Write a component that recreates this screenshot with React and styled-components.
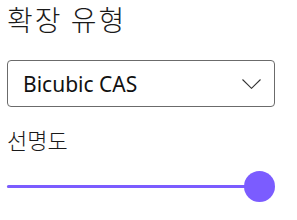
import React, {useState} from 'react';
import styled, {createGlobalStyle} from "styled-components";

const GlobalStyle = createGlobalStyle`
html, body {
margin: 0;
padding: 0;
background: #ffffff;
}
body {
font-family: "Noto Sans", "Noto Sans CJK KR", sans-serif;
color: #1a1a1a;
}
`;

function App() {
    const [value] = useState('Bicubic CAS')
    const [sharpness] = useState(100)

    return (
        <>
            <GlobalStyle/>
            <Panel>
                <Title>확장 유형</Title>
                <Select>
                    <SelectText>{value}</SelectText>
                    <svg width="19" height="10" viewBox="0 0 19 10">
                        <path d="M0.5 0.5 L9.5 9.3 L18.5 0.5" fill="none" stroke="#333" strokeWidth="1.1"/>
                    </svg>
                </Select>
                <Label>선명도</Label>
                <Slider>
                    <Track>
                        <Fill style={{width: `${sharpness}%`}}/>
                    </Track>
                    <Thumb/>
                </Slider>
            </Panel>
        </>
    );
}

const Panel = styled.div`
display: flex;
flex-direction: column;
padding: 0 22px 0 7px;
width: 297px;
box-sizing: border-box;
`;
const Title = styled.div`
font-family: "Noto Sans CJK KR", sans-serif;
font-size: 28px;
font-weight: 300;
letter-spacing: 2px;
line-height: 38px;
margin-top: 0px;
`;
const Select = styled.div`
display: flex;
align-items: center;
justify-content: space-between;
margin-top: 22px;
height: 47px;
box-sizing: border-box;
border: 1.5px solid #6b6b6b;
border-radius: 4px;
padding: 0 13px 0 15px;
`;
const SelectText = styled.div`
font-size: 21px;
color: #111;
`;
const Label = styled.div`
font-family: "Noto Sans CJK KR", sans-serif;
font-size: 22px;
font-weight: 300;
line-height: 30px;
margin-top: 17px;
`;
const Slider = styled.div`
position: relative;
display: flex;
align-items: center;
height: 31px;
margin-top: 17px;
`;
const Track = styled.div`
flex: 1;
height: 3px;
border-radius: 2px;
background: #d0d0d0;
margin-right: 14px;
`;
const Fill = styled.div`
height: 100%;
border-radius: 2px;
background: #7b5cff;
`;
const Thumb = styled.div`
position: absolute;
right: 0;
top: 0;
width: 31px;
height: 31px;
border-radius: 50%;
background: #7b5cff;
`;

export default App;
